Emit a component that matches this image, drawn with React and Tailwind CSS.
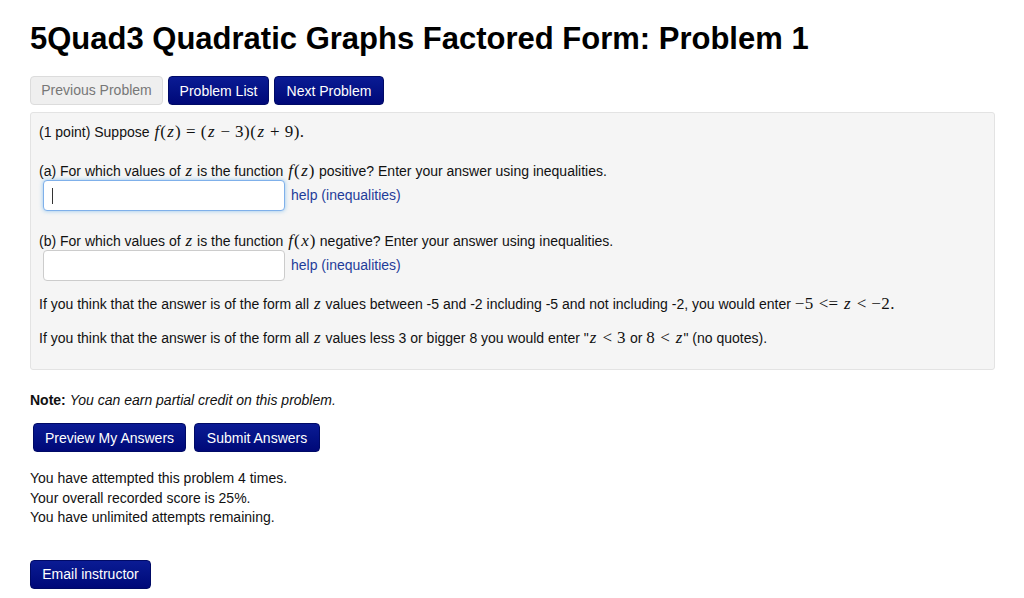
import React from 'react';

const navyBtn =
  'rounded-[4px] border border-[#000a66] bg-gradient-to-b from-[#0b1b94] to-[#000878] text-white text-[14px] leading-none';

function M({ children }) {
  return <span className="font-['Liberation_Serif',serif] text-[17px] tracking-[0.5px]">{children}</span>;
}

function I({ children }) {
  return <span className="font-['Liberation_Serif',serif] italic text-[17px] mx-[1px]">{children}</span>;
}

function Op({ children }) {
  return <span className="font-['Liberation_Serif',serif] text-[17px] mx-[5px]">{children}</span>;
}

function AnswerRow({ focused }) {
  return (
    <div className="flex items-center ml-[4px]">
      <div
        className={`w-[242px] h-[31px] rounded-[4px] bg-white border flex items-center pl-[8px] ${
          focused ? 'border-[#7fb0ea] shadow-[0_0_4px_rgba(82,168,236,0.6)]' : 'border-[#cccccc]'
        }`}
      >
        {focused && <span className="w-px h-[16px] bg-[#333]" />}
      </div>
      <a className="ml-[6px] text-[14px] text-[#1f3c99]">help (inequalities)</a>
    </div>
  );
}

export default function App() {
  return (
    <div className="bg-white min-h-[598px] px-[30px] pt-[21px] font-['Liberation_Sans',Arial,sans-serif] text-[#111]">
      <h1 className="text-[31px] font-bold leading-[36px] text-black">
        5Quad3 Quadratic Graphs Factored Form: Problem 1
      </h1>

      <div className="flex gap-[5px] mt-[19px]">
        <button className="w-[133px] h-[29px] rounded-[4px] border border-[#dcdcdc] bg-[#efefef] text-[#777] text-[14px]">
          Previous Problem
        </button>
        <button className={`${navyBtn} w-[101px] h-[29px]`}>Problem List</button>
        <button className={`${navyBtn} w-[110px] h-[29px]`}>Next Problem</button>
      </div>

      <div className="mt-[7px] w-[965px] h-[258px] bg-[#f5f5f5] border border-[#e3e3e3] rounded-[3px] px-[8px] pt-[10px] text-[14px]">
        <p className="leading-[18px]">
          (1 point) Suppose <I>f</I>
          <M>(</M>
          <I>z</I>
          <M>)</M>
          <Op>=</Op>
          <M>(</M>
          <I>z</I>
          <Op>−</Op>
          <M>3)(</M>
          <I>z</I>
          <Op>+</Op>
          <M>9).</M>
        </p>

        <p className="leading-[18px] mt-[21px]">
          (a) For which values of <I>z</I> is the function <I>f</I>
          <M>(</M>
          <I>z</I>
          <M>)</M> positive? Enter your answer using inequalities.
        </p>
        <AnswerRow focused />

        <p className="leading-[18px] mt-[21px]">
          (b) For which values of <I>z</I> is the function <I>f</I>
          <M>(</M>
          <I>x</I>
          <M>)</M> negative? Enter your answer using inequalities.
        </p>
        <AnswerRow />

        <p className="leading-[18px] mt-[14px]">
          If you think that the answer is of the form all <I>z</I> values between -5 and -2 including -5 and not
          including -2, you would enter <M>−5</M>
          <Op>&lt;=</Op>
          <I>z</I>
          <Op>&lt;</Op>
          <M>−2.</M>
        </p>
        <p className="leading-[18px] mt-[16px]">
          If you think that the answer is of the form all <I>z</I> values less 3 or bigger 8 you would enter "
          <I>z</I>
          <Op>&lt;</Op>
          <M>3</M> or <M>8</M>
          <Op>&lt;</Op>
          <I>z</I>" (no quotes).
        </p>
      </div>

      <p className="mt-[21px] text-[14px] leading-[18px]">
        <b>Note:</b> <i>You can earn partial credit on this problem.</i>
      </p>

      <div className="flex gap-[8px] mt-[14px] ml-[3px]">
        <button className={`${navyBtn} w-[153px] h-[29px]`}>Preview My Answers</button>
        <button className={`${navyBtn} w-[126px] h-[29px]`}>Submit Answers</button>
      </div>

      <div className="mt-[17px] text-[14px] leading-[19.5px]">
        <p>You have attempted this problem 4 times.</p>
        <p>Your overall recorded score is 25%.</p>
        <p>You have unlimited attempts remaining.</p>
      </div>

      <button className={`${navyBtn} w-[121px] h-[29px] mt-[32px]`}>Email instructor</button>
    </div>
  );
}
